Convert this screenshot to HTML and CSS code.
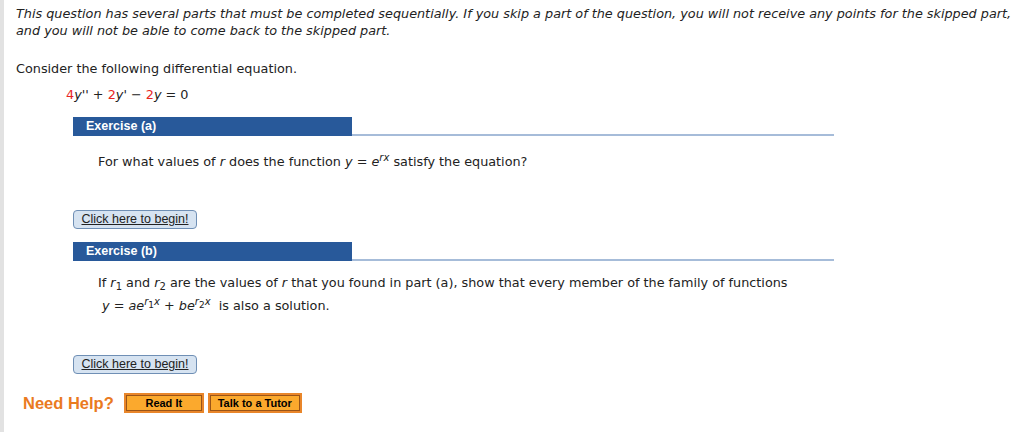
FILE: index.html
```html
<!DOCTYPE html>
<html>
<head>
<meta charset="utf-8">
<link rel="stylesheet" href="styles.css">
</head>
<body>
<div class="page">
  <p class="intro">This question has several parts that must be completed sequentially. If you skip a part of the question, you will not receive any points for the skipped part, and you will not be able to come back to the skipped part.</p>
  <p class="consider">Consider the following differential equation.</p>
  <p class="eqn"><span class="red">4</span><i>y</i>'' + <span class="red">2</span><i>y</i>' &minus; <span class="red">2</span><i>y</i> = 0</p>

  <div class="exercise">
    <div class="ex-head"><span class="ex-title">Exercise (a)</span></div>
    <p class="ex-text">For what values of <i>r</i> does the function <i>y</i> = <i>e</i><sup><i>rx</i></sup> satisfy the equation?</p>
    <button class="begin">Click here to begin!</button>
  </div>

  <div class="exercise">
    <div class="ex-head ex-head-b"><span class="ex-title">Exercise (b)</span></div>
    <p class="ex-text ex-text-b">If <i>r</i><sub>1</sub> and <i>r</i><sub>2</sub> are the values of <i>r</i> that you found in part (a), show that every member of the family of functions</p>
    <p class="ex-text2"><i>y</i> = <i>ae</i><sup><i>r</i><sub>1</sub><i>x</i></sup> + <i>be</i><sup><i>r</i><sub>2</sub><i>x</i></sup>&nbsp; is also a solution.</p>
    <button class="begin">Click here to begin!</button>
  </div>

  <div class="help">
    <span class="need">Need Help?</span>
    <button class="orange read">Read It</button>
    <button class="orange tutor">Talk to a Tutor</button>
  </div>
</div>
</body>
</html>
```

FILE: styles.css
```css
html, body {
  margin: 0;
  padding: 0;
  background: #ffffff;
}
body {
  width: 1024px;
  height: 432px;
  overflow: hidden;
}
.page {
  border-left: 4px solid #e2e2e2;
  height: 432px;
  box-sizing: border-box;
  padding: 5px 0 0 12px;
  font-family: "DejaVu Sans", Verdana, sans-serif;
  font-size: 12.8px;
  color: #222;
}
p { margin: 0; }
.intro {
  font-style: italic;
  line-height: 17px;
}
.consider {
  margin-top: 20px;
  line-height: 20px;
}
.eqn {
  margin-top: 6px;
  margin-left: 50px;
  line-height: 20px;
}
.red { color: #e8251f; }
.exercise {
  margin-left: 57px;
  width: 761px;
}
.ex-head {
  margin-top: 12px;
  border-bottom: 2px solid #a6bcd9;
  height: 17px;
}
.ex-head-b { margin-top: 13px; }
.ex-title {
  display: block;
  width: 266px;
  height: 19px;
  background: #28599a;
  color: #fff;
  font-family: "Liberation Sans", Arial, sans-serif;
  font-weight: bold;
  font-size: 12.5px;
  line-height: 18px;
  padding-left: 13px;
}
.ex-text {
  margin-top: 15px;
  margin-left: 25px;
  line-height: 22px;
}
.ex-text-b { margin-top: 11px; }
.ex-text2 {
  margin-left: 29px;
  line-height: 24px;
}
sup {
  font-size: 10px;
  vertical-align: 5px;
  line-height: 0;
}
sub {
  font-size: 10px;
  vertical-align: -3px;
  line-height: 0;
}
sup sub {
  font-size: 9px;
  vertical-align: -3px;
}
.begin {
  display: block;
  margin-top: 37px;
  height: 19px;
  width: 124px;
  padding: 0;
  background: #d6e3f1;
  border: 1px solid #6f8fb5;
  border-radius: 4px;
  font-family: "Liberation Sans", Arial, sans-serif;
  font-size: 12.5px;
  color: #222;
  text-decoration: underline;
  line-height: 17px;
}
.help {
  display: flex;
  align-items: center;
  height: 20px;
  margin-top: 19px;
  margin-left: 7px;
}
.need {
  color: #ea7a1f;
  font-family: "Liberation Sans", Arial, sans-serif;
  font-weight: bold;
  font-size: 16.5px;
  margin-right: 10px;
}
.orange {
  height: 20px;
  padding: 0;
  background: #fba92d;
  border: 2px solid #e9862a;
  box-shadow: inset 0 0 0 1px #9a5418;
  font-family: "Liberation Sans", Arial, sans-serif;
  font-weight: bold;
  font-size: 11px;
  color: #000;
  line-height: 16px;
}
.read { width: 80px; margin-right: 4px; }
.tutor { width: 94px; }
```
